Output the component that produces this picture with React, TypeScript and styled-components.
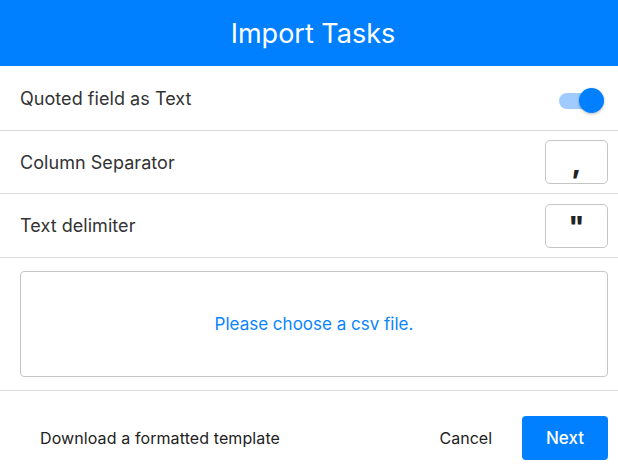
import React, { useState } from "react";
import styled, { createGlobalStyle } from "styled-components";

const GlobalStyle = createGlobalStyle`
  html, body {
    margin: 0;
    padding: 0;
    background: #ffffff;
  }
  body {
    font-family: Inter, "Noto Sans", "Liberation Sans", sans-serif;
  }
  * { box-sizing: border-box; }
`;

const Dialog = styled.div`
  width: 618px;
  height: 468px;
  background: #ffffff;
  display: flex;
  flex-direction: column;
`;

const Header = styled.header`
  height: 66px;
  background: #0080ff;
  color: #ffffff;
  display: flex;
  align-items: center;
  justify-content: center;
  font-size: 27px;
  font-weight: 400;
  padding-left: 8px;
`;

const OptionRow = styled.div<{ $h?: number }>`
  height: ${(p) => p.$h ?? 64}px;
  border-bottom: 1px solid #dcdcdc;
  display: flex;
  align-items: center;
  justify-content: space-between;
  padding: 0 10px 0 20px;
`;

const Label = styled.span`
  font-size: 18px;
  color: #333333;
  letter-spacing: 0.05px;
`;

const Toggle = styled.button`
  position: relative;
  width: 46px;
  height: 26px;
  margin: 6px 4px 0 0;
  padding: 0;
  border: none;
  background: transparent;
  cursor: pointer;
`;

const Track = styled.span<{ $on: boolean }>`
  position: absolute;
  left: 1px;
  top: 5px;
  width: 40px;
  height: 16px;
  border-radius: 8px;
  background: ${(p) => (p.$on ? "#9fcbff" : "#c6c6c6")};
`;

const Knob = styled.span<{ $on: boolean }>`
  position: absolute;
  top: 0;
  ${(p) => (p.$on ? "right: 0;" : "left: 0;")}
  width: 25px;
  height: 25px;
  border-radius: 50%;
  background: ${(p) => (p.$on ? "#0080ff" : "#f5f5f5")};
  box-shadow: 0 1px 3px rgba(0, 0, 0, 0.3);
`;

const CharInput = styled.input`
  width: 63px;
  height: 44px;
  border: 1px solid #c4c4c4;
  border-radius: 5px;
  text-align: center;
  font-family: Inter, "Liberation Sans", sans-serif;
  font-size: 27px;
  font-weight: 800;
  color: #222222;
  padding: 2px 0 0 0;
  outline: none;
  background: #ffffff;
`;

const UploadSection = styled.div`
  padding: 13px 10px 13px 20px;
  border-bottom: 1px solid #dcdcdc;
`;

const DropZone = styled.div`
  height: 106px;
  border: 1px solid #c6c6c6;
  border-radius: 4px;
  display: flex;
  align-items: center;
  justify-content: center;
  color: #0a84ff;
  font-size: 17px;
  cursor: pointer;
`;

const Footer = styled.footer`
  display: flex;
  align-items: center;
  justify-content: space-between;
  padding: 25px 10px 0 40px;
`;

const LinkText = styled.span`
  font-size: 16px;
  color: #222222;
  letter-spacing: 0.1px;
  cursor: pointer;
`;

const Actions = styled.div`
  display: flex;
  align-items: center;
  gap: 30px;
`;

const TextButton = styled.button`
  border: none;
  background: transparent;
  font-family: inherit;
  font-size: 16px;
  color: #222222;
  padding: 0;
  cursor: pointer;
`;

const PrimaryButton = styled.button`
  width: 86px;
  height: 44px;
  border: none;
  border-radius: 4px;
  background: #0080ff;
  color: #ffffff;
  font-family: inherit;
  font-size: 17px;
  font-weight: 500;
  cursor: pointer;
`;

export default function App() {
  const [quoted, setQuoted] = useState(true);
  return (
    <>
      <GlobalStyle />
      <Dialog>
        <Header>Import Tasks</Header>
        <OptionRow $h={65}>
          <Label>Quoted field as Text</Label>
          <Toggle onClick={() => setQuoted(!quoted)} aria-label="Quoted field as Text">
            <Track $on={quoted} />
            <Knob $on={quoted} />
          </Toggle>
        </OptionRow>
        <OptionRow $h={63}>
          <Label>Column Separator</Label>
          <CharInput defaultValue="," maxLength={1} />
        </OptionRow>
        <OptionRow>
          <Label>Text delimiter</Label>
          <CharInput defaultValue={'"'} maxLength={1} />
        </OptionRow>
        <UploadSection>
          <DropZone>Please choose a csv file.</DropZone>
        </UploadSection>
        <Footer>
          <LinkText>Download a formatted template</LinkText>
          <Actions>
            <TextButton>Cancel</TextButton>
            <PrimaryButton>Next</PrimaryButton>
          </Actions>
        </Footer>
      </Dialog>
    </>
  );
}
